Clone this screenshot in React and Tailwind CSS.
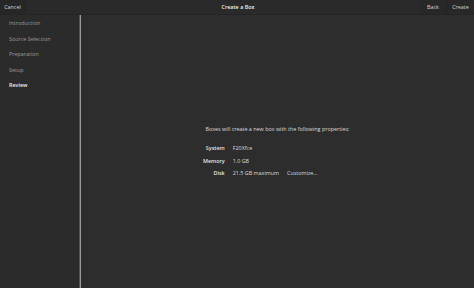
import React from 'react';

const steps = ['Introduction', 'Source Selection', 'Preparation', 'Setup', 'Review'];

const props = [
  { label: 'System', value: 'F20Xfce' },
  { label: 'Memory', value: '1.0 GB' },
  { label: 'Disk', value: '21.5 GB maximum', extra: 'Customize...' },
];

const App = () => {
  return (
    <div
      className="w-[474px] h-[288px] flex flex-col bg-[#2d2d2d] text-[#dcdcdc] text-[5.4px] overflow-hidden"
      style={{ fontFamily: '"Open Sans", "Liberation Sans", sans-serif' }}
    >
      <div className="h-[15px] flex items-center bg-[#2a2a2a] border-b border-[#252525]">
        <button className="h-full w-[26px] flex items-center justify-center bg-[#272727] border-r border-[#222] text-[#d6d6d6]">
          Cancel
        </button>
        <div className="flex-1 text-center font-semibold text-[#eeeeee] pl-[30px]">Create a Box</div>
        <button className="h-full w-[26px] flex items-center justify-center bg-[#282828] text-[#d6d6d6]">
          Back
        </button>
        <button className="h-full w-[28px] flex items-center justify-center bg-[#282828] border-l border-[#222] text-[#d6d6d6]">
          Create
        </button>
      </div>
      <div className="flex flex-1">
        <div className="w-[79px] pt-[0.5px] pl-[9px] flex flex-col bg-[#2b2b2b]">
          {steps.map((s, i) => (
            <div
              key={s}
              className={
                'h-[15.5px] flex items-center ' +
                (i === steps.length - 1 ? 'text-[#f0f0f0] font-semibold' : 'text-[#9a9a9a]')
              }
            >
              {s}
            </div>
          ))}
        </div>
        <div className="w-[2px] bg-[#9a9a9a] border-l border-[#555]" />
        <div className="flex-1 flex flex-col items-center pt-[110px]">
          <div className="text-[#dcdcdc]">Boxes will create a new box with the following properties:</div>
          <div className="mt-[11px] grid grid-cols-[auto_auto] gap-x-[8px] gap-y-[4px] self-start ml-[122px]">
            {props.map((p) => (
              <React.Fragment key={p.label}>
                <div className="text-right font-semibold text-[#e4e4e4] leading-[8.5px]">{p.label}</div>
                <div className="flex gap-[8px] leading-[8.5px]">
                  <span>{p.value}</span>
                  {p.extra && <span>{p.extra}</span>}
                </div>
              </React.Fragment>
            ))}
          </div>
        </div>
      </div>
    </div>
  );
};

export default App;
